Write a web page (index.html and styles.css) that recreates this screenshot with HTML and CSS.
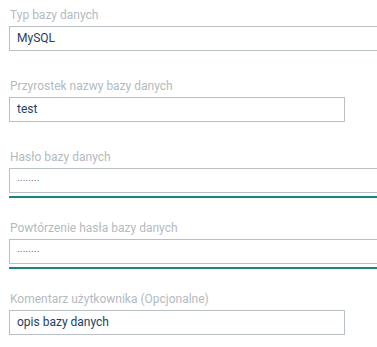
FILE: index.html
```
<!DOCTYPE html>
<html>

<head>
    <meta charset="utf-8">
    <link rel="stylesheet" href="styles.css">
</head>

<body>

    <div id="form">
        <div class="field">
            <div class="label">Typ bazy danych</div>
            <div class="input wide">MySQL</div>
        </div>
        <div class="field">
            <div class="label">Przyrostek nazwy bazy danych</div>
            <div class="input">test</div>
        </div>
        <div class="field password">
            <div class="label">Hasło bazy danych</div>
            <div class="input wide"><span class="dots">........</span></div>
            <div class="meter"></div>
        </div>
        <div class="field password">
            <div class="label">Powtórzenie hasła bazy danych</div>
            <div class="input wide"><span class="dots">........</span></div>
            <div class="meter"></div>
        </div>
        <div class="field">
            <div class="label">Komentarz użytkownika (Opcjonalne)</div>
            <div class="input">opis bazy danych</div>
        </div>
    </div>

</body>

</html>
```

FILE: styles.css
```
* {
    box-sizing: border-box;
}

body {
    padding: 0px;
    margin: 0px;
    background: #ffffff;
    overflow: hidden;
    font-family: Roboto, "Liberation Sans", sans-serif;
    font-size: 12px;
}

#form {
    padding: 7px 0px 0px 9px;
    width: 377px;
    overflow: hidden;
}

.field {
    margin-bottom: 27px;
}

.field.password {
    margin-bottom: 22px;
}

.label {
    height: 16px;
    line-height: 16px;
    margin-bottom: 3px;
    padding-left: 1px;
    color: #b3bbc0;
    white-space: nowrap;
}

.input {
    width: 336px;
    height: 25px;
    line-height: 23px;
    padding: 0px 7px;
    border: 1px solid #b8c0c4;
    background: #ffffff;
    color: #23415e;
    white-space: nowrap;
}

.input.wide {
    width: 420px;
}

.dots {
    position: relative;
    top: -3px;
    font-size: 10px;
    letter-spacing: 0.2px;
    color: #5a6e80;
}

.meter {
    width: 420px;
    height: 2px;
    margin-top: 3px;
    background: #18877b;
}
```
